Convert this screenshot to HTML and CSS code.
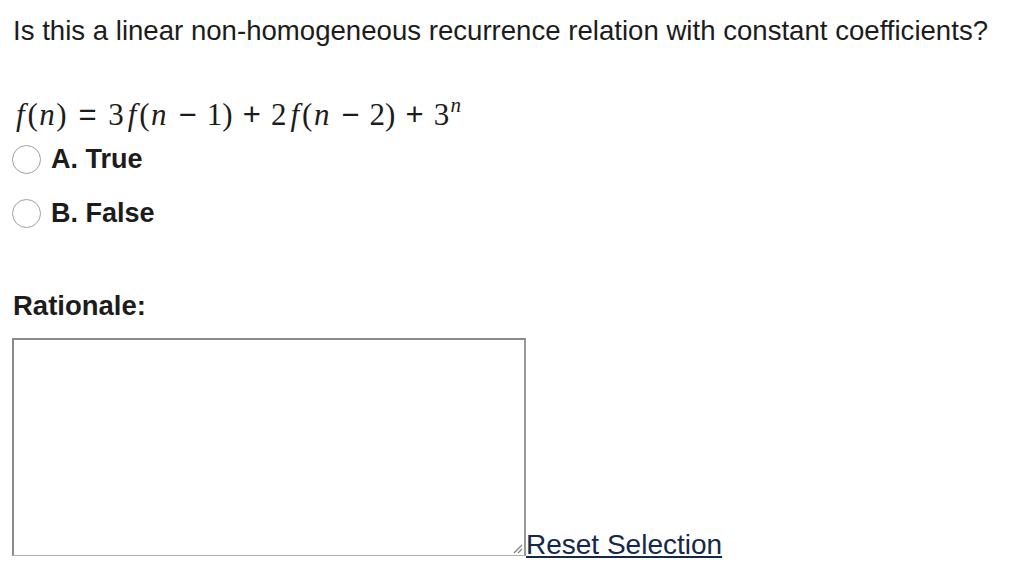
FILE: index.html
```html
<!DOCTYPE html>
<html lang="en">
<head>
<meta charset="UTF-8">
<title>Question</title>
<link rel="stylesheet" href="styles.css">
</head>
<body>
<div class="question-ctnr">
<div class="question-text">Is this a linear non-homogeneous recurrence relation with constant coefficients?</div>
<div class="formula"><i class="fn">f</i>(<i class="var">n</i>)<span class="rel">=</span>3<i class="fn">f</i>(<i class="var">n</i><span class="op">&minus;</span>1)<span class="op">+</span>2<i class="fn">f</i>(<i class="var">n</i><span class="op">&minus;</span>2)<span class="op">+</span>3<sup><i class="var">n</i></sup></div>
<div class="options">
<label class="option-item"><span class="radio-circle"></span><span class="option-label">A. True</span></label>
<label class="option-item"><span class="radio-circle"></span><span class="option-label">B. False</span></label>
</div>
<div class="rationale-title">Rationale:</div>
<div class="rationale-row">
<div class="rationale-box">
<svg class="resize-grip" width="12" height="12" viewBox="0 0 12 12"><path d="M11 3 L3 11 M11 7 L7 11" stroke="#808080" stroke-width="1.2" fill="none"/></svg>
</div>
<a class="reset-link" href="#">Reset Selection</a>
</div>
</div>
</body>
</html>
```

FILE: styles.css
```css
html,body{
margin:0px;
padding:0px;
background:#fff;
color:#1c1c1c;
}
*{font-family: 'Liberation Sans', Arial, sans-serif;}
.question-ctnr{
padding: 14px 12px;
display: flex;
flex-direction: column;
}
.question-text{
font-size: 27.6px;
line-height: 34px;
padding-left: 1px;
}
.formula{
margin-top: 49px;
height: 36px;
font-family: 'Liberation Serif', serif;
font-size: 31px;
line-height: 36px;
white-space: nowrap;
}
.formula i{font-family: 'Liberation Serif', serif;}
.formula .fn{
margin-left: 0.13em;
margin-right: 0.09em;
}
.formula .var{
padding: 0 0.05em;
}
.formula .rel{margin: 0 0.38em;}
.formula .op{margin: 0 0.33em;}
.formula sup{
font-size: 21px;
line-height: 0;
vertical-align: 13px;
}
.options{
display: flex;
flex-direction: column;
gap: 24px;
margin-top: 11px;
}
.option-item{
display: flex;
align-items: center;
gap: 10px;
height: 30px;
}
.radio-circle{
width: 29px;
height: 29px;
border-radius: 50%;
border: 1.5px solid #a0a0a0;
box-sizing: border-box;
background: #fff;
}
.option-label{
font-size: 27px;
font-weight: bold;
}
.rationale-title{
margin-top: 61px;
font-size: 27.5px;
line-height: 34px;
font-weight: bold;
padding-left: 1px;
}
.rationale-row{
display: flex;
align-items: flex-end;
margin-top: 15px;
}
.rationale-box{
width: 514px;
height: 218px;
box-sizing: border-box;
border: 1px solid #b0b0b0;
border-top: 2px solid #8a8a8a;
border-left: 2px solid #8a8a8a;
border-right: 2px solid #999;
position: relative;
}
.resize-grip{
position: absolute;
right: 1px;
bottom: 1px;
}
.reset-link{
font-size: 28px;
color: #14284a;
text-decoration: underline;
line-height: 28px;
margin-bottom: -3px;
}
```
